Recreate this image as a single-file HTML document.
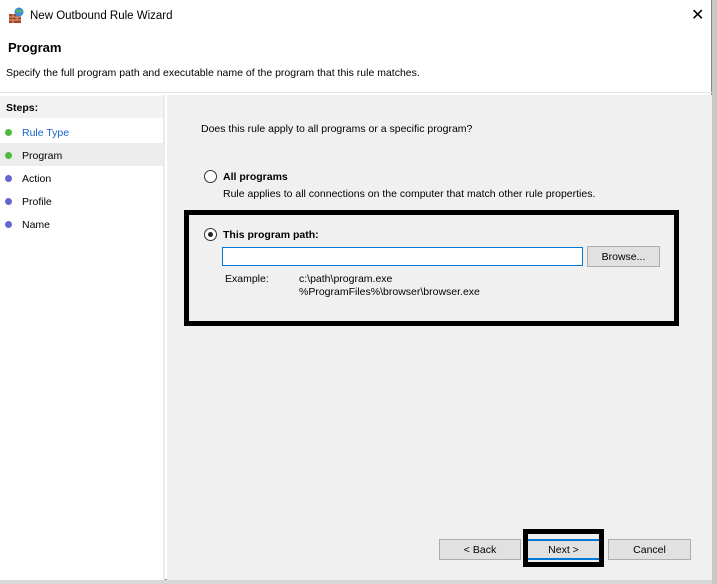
<!DOCTYPE html>
<html><head><style>
*{margin:0;padding:0;box-sizing:border-box}
body{width:717px;height:584px;background:#d8d8d8;font-family:"Liberation Sans",sans-serif;font-size:10.5px;color:#000;position:relative;overflow:hidden}
.a{position:absolute}
.win{left:0;top:0;width:712px;height:580px;background:#fff;border-right:1px solid #888;border-bottom:1px solid #888}
.t{white-space:nowrap}
.dot{width:7px;height:7px;border-radius:50%}
.btn{background:#e1e1e1;border:1px solid #adadad;text-align:center;line-height:19px;height:21px;font-size:10.5px}
</style></head><body>
<div class="a" style="left:0;top:0;width:717px;height:2px;background:#555"></div>
<div class="a win"></div>
<div class="a" style="left:712px;top:0;width:5px;height:584px;background:#c8c8c8"></div>
<svg class="a" style="left:8px;top:7px" width="17" height="17" viewBox="0 0 17 17"><rect x="1" y="7" width="12" height="9" fill="#a5442a"/><path d="M1 10h12M1 13h12M5 7v3M9 10v3M5 13v3" stroke="#e3a07f" stroke-width="1"/><circle cx="11" cy="5" r="4.5" fill="#3d8fd6"/><path d="M8 4c2-1 4 1 6 0" stroke="#5cbb4a" stroke-width="2" fill="none"/></svg>
<div class="a t" style="left:30px;top:10px;font-size:11.5px">New Outbound Rule Wizard</div>
<div class="a t" style="left:691px;top:5px;font-size:16px;color:#000;font-weight:300">✕</div>
<div class="a t" style="left:8px;top:40px;font-size:13px;font-weight:bold">Program</div>
<div class="a t" style="left:6px;top:67px">Specify the full program path and executable name of the program that this rule matches.</div>
<div class="a" style="left:0;top:92px;width:712px;height:1px;background:#e4e4e4"></div>
<div class="a" style="left:0;top:95px;width:165px;height:485px;border-right:2px solid #eaeaea;background:#fff"></div>
<div class="a" style="left:0;top:96px;width:163px;height:22px;background:#f2f2f2"></div>
<div class="a t" style="left:6px;top:102px;font-weight:bold">Steps:</div>
<div class="a" style="left:0;top:143px;width:163px;height:23px;background:#ececec"></div>
<div class="a dot" style="left:5px;top:129px;background:#4cbb3c"></div>
<div class="a t" style="left:22px;top:127px;color:#1a64c8">Rule Type</div>
<div class="a dot" style="left:5px;top:152px;background:#4cbb3c"></div>
<div class="a t" style="left:22px;top:150px">Program</div>
<div class="a dot" style="left:5px;top:175px;background:#6666cc"></div>
<div class="a t" style="left:22px;top:173px">Action</div>
<div class="a dot" style="left:5px;top:198px;background:#6666cc"></div>
<div class="a t" style="left:22px;top:196px">Profile</div>
<div class="a dot" style="left:5px;top:221px;background:#6666cc"></div>
<div class="a t" style="left:22px;top:219px">Name</div>
<div class="a" style="left:167px;top:95px;width:545px;height:485px;background:#f0f0f0"></div>
<div class="a t" style="left:201px;top:123px">Does this rule apply to all programs or a specific program?</div>
<div class="a" style="left:204px;top:170px;width:13px;height:13px;border-radius:50%;border:1px solid #333;background:#fff"></div>
<div class="a t" style="left:223px;top:171px;font-weight:bold">All programs</div>
<div class="a t" style="left:223px;top:188px">Rule applies to all connections on the computer that match other rule properties.</div>
<div class="a" style="left:184px;top:210px;width:495px;height:116px;border:5px solid #000"></div>
<div class="a" style="left:204px;top:228px;width:13px;height:13px;border-radius:50%;border:1px solid #333;background:#fff"></div>
<div class="a" style="left:208px;top:232px;width:5px;height:5px;border-radius:50%;background:#222"></div>
<div class="a t" style="left:223px;top:229px;font-weight:bold">This program path:</div>
<div class="a" style="left:222px;top:247px;width:361px;height:19px;border:1px solid #0078d7;background:#fff"></div>
<div class="a btn" style="left:587px;top:246px;width:73px;line-height:21px">Browse...</div>
<div class="a t" style="left:225px;top:273px">Example:</div>
<div class="a t" style="left:299px;top:273px">c:\path\program.exe</div>
<div class="a t" style="left:299px;top:286px">%ProgramFiles%\browser\browser.exe</div>
<div class="a btn" style="left:439px;top:539px;width:82px;line-height:21px">&lt; Back</div>
<div class="a" style="left:523px;top:529px;width:81px;height:38px;border:5px solid #000"></div>
<div class="a btn" style="left:528px;top:539px;width:71px;border:none;border-top:2px solid #0078d7;border-bottom:2px solid #0078d7;background:#e1e1e1;line-height:19px">Next &gt;</div>
<div class="a btn" style="left:608px;top:539px;width:83px;line-height:21px">Cancel</div>
</body></html>
